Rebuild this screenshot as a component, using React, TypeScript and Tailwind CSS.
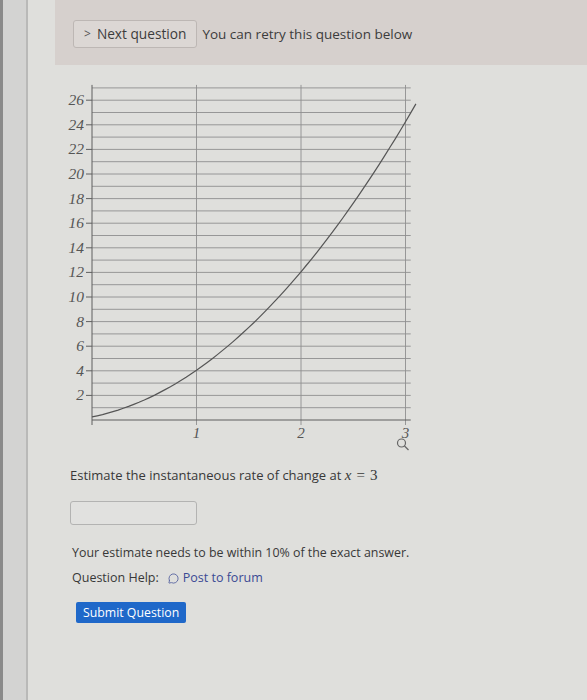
import { MessageCircle } from "lucide-react";

const X0 = 37;
const Y0 = 340;
const UX = 104.5;
const UY = 12.3;
const YMAX = 27;
const XMAX = 3.05;

const px = (x: number) => X0 + x * UX;
const py = (y: number) => Y0 - y * UY;

function Graph() {
  const f = (x: number) => 2.1 * x * x + 1.7 * x + 0.25;
  const pts: string[] = [];
  for (let i = 0; i <= 62; i++) {
    const x = (i / 62) * 3.1;
    pts.push(`${px(x).toFixed(1)},${py(f(x)).toFixed(1)}`);
  }
  const rows = Array.from({ length: YMAX }, (_, i) => i + 1);
  const labels = Array.from({ length: 13 }, (_, i) => (i + 1) * 2);

  return (
    <svg width="380" height="380" viewBox="0 0 380 380" className="block">
      {rows.map((r) => (
        <line key={r} x1={px(0)} x2={px(XMAX)} y1={py(r)} y2={py(r)} stroke="#8f8f8f" strokeWidth="0.9" />
      ))}
      {[1, 2, 3].map((c) => (
        <line key={c} x1={px(c)} x2={px(c)} y1={py(YMAX) - 3} y2={py(0) + 5} stroke="#8f8f8f" strokeWidth="0.9" />
      ))}
      <line x1={px(0)} x2={px(XMAX)} y1={py(0)} y2={py(0)} stroke="#5f5f5f" strokeWidth="1" />
      <line x1={px(0)} x2={px(0)} y1={py(YMAX) - 3} y2={py(0) + 5} stroke="#5f5f5f" strokeWidth="1" />
      {labels.map((l) => (
        <g key={l}>
          <line x1={px(0) - 6} x2={px(0)} y1={py(l)} y2={py(l)} stroke="#5f5f5f" strokeWidth="1" />
          <text
            x={px(0) - 8}
            y={py(l) + 5}
            textAnchor="end"
            fontFamily="'Liberation Serif', serif"
            fontStyle="italic"
            fontSize="15.5"
            fill="#555"
          >
            {l}
          </text>
        </g>
      ))}
      {[1, 2, 3].map((c) => (
        <text
          key={c}
          x={px(c)}
          y={py(0) + 18}
          textAnchor="middle"
          fontFamily="'Liberation Serif', serif"
          fontStyle="italic"
          fontSize="15"
          fill="#555"
        >
          {c}
        </text>
      ))}
      <g stroke="#666" strokeWidth="1.2" fill="none">
        <circle cx={px(3) - 4} cy={py(0) + 23} r="4" />
        <line x1={px(3) - 1} y1={py(0) + 26} x2={px(3) + 3} y2={py(0) + 30} />
      </g>
      <polyline points={pts.join(" ")} fill="none" stroke="#555" strokeWidth="1.2" />
    </svg>
  );
}

export default function App() {
  return (
    <div className="flex h-[700px] w-[587px] overflow-hidden bg-[#dfdfdc] font-['Open_Sans',sans-serif] text-[#383838]">
      <div className="w-[3px] bg-[#8a8a8a]" />
      <div className="w-[23px] bg-[#d3d3d2]" />
      <div className="w-[2px] bg-[#b9b9b8]" />
      <div className="flex-1">
        <div className="ml-[27px] h-[65px] bg-[#d6d0cd] pl-[18px] pt-[20px]">
          <div className="flex items-center gap-[5px]">
            <button className="flex h-[28px] items-center gap-[6px] rounded-[3px] border border-[#bdb7b4] bg-[#dcd7d4] px-[10px] text-[13.7px] text-[#3c3c3c]">
              <span className="text-[12px] text-[#555]">&gt;</span>
              <span>Next question</span>
            </button>
            <span className="text-[13.5px] text-[#3c3c3c]">You can retry this question below</span>
          </div>
        </div>

        <div className="ml-[27px] mt-[15px]">
          <Graph />
        </div>

        <div className="ml-[42px] flex flex-col items-start">
          <p className="mt-[5px] text-[13px] leading-[20px]">
            Estimate the instantaneous rate of change at{" "}
            <span className="font-['Liberation_Serif',serif] text-[15px]">
              <i>x</i>
              <span className="mx-[5px]">=</span>3
            </span>
          </p>
          <input
            className="mt-[16px] h-[24px] w-[127px] rounded-[3px] border border-[#b3b3b2] bg-[#e1e1df]"
            aria-label="answer"
          />
          <p className="ml-[2px] mt-[19px] text-[12.4px] leading-[18px]">
            Your estimate needs to be within 10% of the exact answer.
          </p>
          <div className="ml-[2px] mt-[7px] flex items-center text-[12.5px] leading-[18px]">
            <span>Question Help:</span>
            <span className="ml-[9px] flex items-center gap-[4px] text-[#3b4a94]">
              <MessageCircle size={11} strokeWidth={1.6} />
              Post to forum
            </span>
          </div>
          <button className="ml-[6px] mt-[15px] h-[21px] rounded-[2px] bg-[#1f68c9] px-[7px] text-[12.3px] leading-[21px] text-white">
            Submit Question
          </button>
        </div>
      </div>
    </div>
  );
}
